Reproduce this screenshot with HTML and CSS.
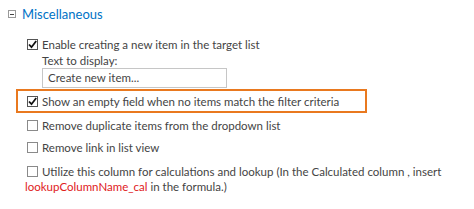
FILE: index.html
```html
<!DOCTYPE html>
<html>
<head>
<meta charset="utf-8">
<link rel="stylesheet" href="styles.css">
</head>
<body>
<div class="section">
  <div class="header">
    <span class="toggle"><span class="minus"></span></span>
    <span class="title">Miscellaneous</span>
  </div>
  <div class="options">
    <div class="row row-enable">
      <span class="cb checked"><svg viewBox="0 0 11 11" width="11" height="11"><path d="M2 5.5 L4.5 8.2 L9.2 2" fill="none" stroke="#111" stroke-width="1.8"/></svg></span>
      <span class="label">Enable creating a new item in the target list</span>
    </div>
    <div class="sub">
      <div class="sublabel">Text to display:</div>
      <div class="input">Create new item...</div>
    </div>
    <div class="row highlight">
      <span class="cb checked"><svg viewBox="0 0 11 11" width="11" height="11"><path d="M2 5.5 L4.5 8.2 L9.2 2" fill="none" stroke="#111" stroke-width="1.8"/></svg></span>
      <span class="label">Show an empty field when no items match the filter criteria</span>
    </div>
    <div class="row row-dup">
      <span class="cb"></span>
      <span class="label">Remove duplicate items from the dropdown list</span>
    </div>
    <div class="row row-link">
      <span class="cb"></span>
      <span class="label">Remove link in list view</span>
    </div>
    <div class="util">
      <span class="cb cb-inline"></span><span class="label">Utilize this column for calculations and lookup</span> <span class="note">(In the Calculated column , insert</span><br><span class="red">lookupColumnName_cal</span> <span class="note2">in the formula.)</span>
    </div>
  </div>
</div>
</body>
</html>
```

FILE: styles.css
```css
html, body {
  margin: 0;
  padding: 0;
  background: #ffffff;
}
body {
  font-family: Lato, "Open Sans", sans-serif;
  color: #444444;
  font-size: 11.5px;
  width: 474px;
  height: 209px;
  overflow: hidden;
}
.section {
  padding-left: 8px;
}
.header {
  display: flex;
  align-items: center;
  height: 28px;
  gap: 6px;
}
.toggle {
  width: 8px;
  height: 8px;
  border: 1px solid #999;
  box-sizing: border-box;
  display: flex;
  align-items: center;
  justify-content: center;
}
.minus {
  width: 4px;
  height: 1px;
  background: #444;
}
.title {
  color: #0072c6;
  font-size: 13px;
}
.options {
  padding-left: 8px;
}
.row {
  display: flex;
  align-items: center;
  gap: 4px;
  padding-left: 11px;
  height: 20px;
  white-space: nowrap;
}
.row-enable {
  margin-top: 7px;
  height: 18px;
}
.cb {
  width: 11px;
  height: 11px;
  border: 1px solid #8a8a8a;
  box-sizing: border-box;
  display: inline-flex;
  align-items: center;
  justify-content: center;
  background: #fff;
  flex: none;
}
.cb.checked {
  border-color: #555;
}
.cb svg {
  display: block;
  margin: -1px;
}
.sub {
  padding-left: 26px;
}
.sublabel {
  height: 15px;
  line-height: 15px;
}
.input {
  width: 185px;
  height: 20px;
  box-sizing: border-box;
  border: 1px solid #c6c6c6;
  padding-left: 5px;
  line-height: 18px;
  color: #444;
}
.highlight {
  margin-top: 1px;
  height: 24px;
  box-sizing: border-box;
  border: 2px solid #e9791f;
  width: 351px;
  padding-left: 9px;
}
.row-dup {
  margin-top: 2px;
}
.row-link {
  margin-top: 2px;
}
.util {
  margin-top: 7px;
  padding-left: 9px;
  line-height: 15px;
  white-space: nowrap;
}
.cb-inline {
  margin-left: 2px;
  margin-right: 4px;
  vertical-align: -1px;
}
.red {
  color: #e0201b;
}
```
